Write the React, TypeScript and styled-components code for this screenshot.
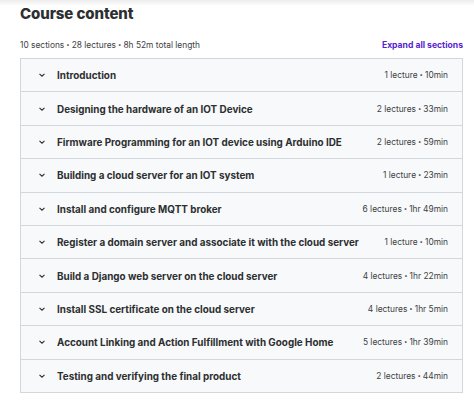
import React from 'react';
import styled, { createGlobalStyle } from 'styled-components';

const GlobalStyle = createGlobalStyle`
  html, body {
    margin: 0;
    padding: 0;
    background: #ffffff;
    font-family: Inter, "Liberation Sans", sans-serif;
    color: #2d2f31;
  }
`;

type Section = {
  title: string;
  lectures: number;
  length: string;
};

const sections: Section[] = [
  { title: 'Introduction', lectures: 1, length: '10min' },
  { title: 'Designing the hardware of an IOT Device', lectures: 2, length: '33min' },
  { title: 'Firmware Programming for an IOT device using Arduino IDE', lectures: 2, length: '59min' },
  { title: 'Building a cloud server for an IOT system', lectures: 1, length: '23min' },
  { title: 'Install and configure MQTT broker', lectures: 6, length: '1hr 49min' },
  { title: 'Register a domain server and associate it with the cloud server', lectures: 1, length: '10min' },
  { title: 'Build a Django web server on the cloud server', lectures: 4, length: '1hr 22min' },
  { title: 'Install SSL certificate on the cloud server', lectures: 4, length: '1hr 5min' },
  { title: 'Account Linking and Action Fulfillment with Google Home', lectures: 5, length: '1hr 39min' },
  { title: 'Testing and verifying the final product', lectures: 2, length: '44min' },
];

const Page = styled.div`
  width: 474px;
  height: 402px;
  box-sizing: border-box;
  padding: 3px 11px 0 20px;
  overflow: hidden;
  background: linear-gradient(#ececec 0, #ffffff 6px);
`;

const Title = styled.h2`
  margin: 0;
  font-size: 15px;
  font-weight: 800;
  letter-spacing: -0.1px;
  line-height: 22px;
  color: #2d2f31;
`;

const Summary = styled.div`
  display: flex;
  justify-content: space-between;
  align-items: center;
  margin-top: 9px;
  height: 22px;
  font-size: 8.4px;
  color: #3e4143;
`;

const Dot = styled.span`
  font-size: 6px;
  margin: 0 2px;
  vertical-align: 1px;
`;

const ExpandLink = styled.button`
  border: 0;
  background: none;
  padding: 0;
  font-family: inherit;
  font-size: 8.6px;
  font-weight: 700;
  color: #5624d0;
  cursor: pointer;
`;

const Panel = styled.div`
  margin-top: 2px;
  border: 1px solid #d1d7dc;
  border-bottom: 0;
`;

const Row = styled.div`
  display: flex;
  align-items: center;
  height: 32.4px;
  padding: 0 14px 0 17px;
  background: #f7f9fa;
  border-bottom: 1px solid #d1d7dc;
`;

const Chevron = styled.svg`
  width: 8px;
  height: 8px;
  flex-shrink: 0;
  margin-right: 11px;
`;

const SectionTitle = styled.span`
  flex: 1;
  font-size: 9.9px;
  font-weight: 700;
  white-space: nowrap;
`;

const SectionMeta = styled.span`
  font-size: 8.4px;
  color: #3e4143;
  white-space: nowrap;
`;

export default function App() {
  return (
    <>
      <GlobalStyle />
      <Page>
        <Title>Course content</Title>
        <Summary>
          <span>
            10 sections<Dot>•</Dot>28 lectures<Dot>•</Dot>8h 52m total length
          </span>
          <ExpandLink>Expand all sections</ExpandLink>
        </Summary>
        <Panel>
          {sections.map(s => (
            <Row key={s.title}>
              <Chevron viewBox="0 0 8 8">
                <path d="M1.5 2.8 L4 5.2 L6.5 2.8" fill="none" stroke="#2d2f31" strokeWidth="1.1" />
              </Chevron>
              <SectionTitle>{s.title}</SectionTitle>
              <SectionMeta>
                {s.lectures} {s.lectures === 1 ? 'lecture' : 'lectures'}
                <Dot>•</Dot>
                {s.length}
              </SectionMeta>
            </Row>
          ))}
        </Panel>
      </Page>
    </>
  );
}
